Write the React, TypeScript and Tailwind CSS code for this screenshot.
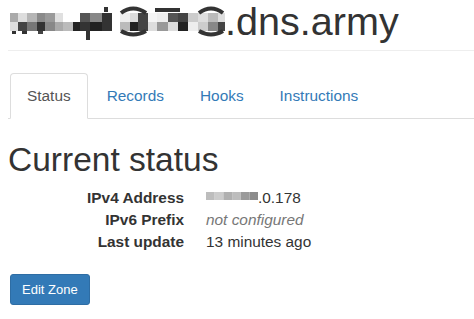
import React from "react";

const topRow: [number, string][] = [
  [10, "#aaaaaa"], [18, "#dddddd"], [27, "#b5b5b5"], [37, "#8a8a8a"], [45, "#9a9a9a"],
  [55, "#e0e0e0"], [63, "#ffffff"], [73, "#ffffff"], [80, "#555555"], [90, "#888888"],
  [102, "#333333"], [112, "#ffffff"], [120, "#eeeeee"], [130, "#dddddd"], [138, "#444444"],
  [148, "#f5f5f5"], [157, "#eeeeee"], [168, "#555555"], [178, "#444444"], [188, "#cccccc"],
  [198, "#dddddd"], [208, "#bbbbbb"], [218, "#dddddd"],
];
const bottomRow: [number, string][] = [
  [10, "#dddddd"], [18, "#444444"], [27, "#777777"], [37, "#333333"], [45, "#888888"],
  [55, "#aaaaaa"], [63, "#bbbbbb"], [73, "#222222"], [80, "#333333"], [90, "#222222"],
  [102, "#333333"], [112, "#ffffff"], [120, "#bbbbbb"], [130, "#222222"], [138, "#444444"],
  [148, "#dddddd"], [157, "#999999"], [168, "#dddddd"], [178, "#222222"], [188, "#eeeeee"],
  [198, "#cccccc"], [208, "#888888"], [218, "#444444"],
];

function widthOf(arr: [number, string][], i: number) {
  return i + 1 < arr.length ? arr[i + 1][0] - arr[i][0] : 7;
}

function TitleMosaic() {
  // svg origin at page x=8, y=1
  return (
    <svg width="217" height="40" viewBox="0 0 217 40" className="shrink-0">
      {topRow.map(([x, c], i) => (
        <rect key={"t" + i} x={x - 8} y={12} width={widthOf(topRow, i)} height={9} fill={c} />
      ))}
      {bottomRow.map(([x, c], i) => (
        <rect key={"b" + i} x={x - 8} y={21} width={widthOf(bottomRow, i)} height={9} fill={c} />
      ))}
      <rect x={4} y={30} width={4} height={3} fill="#333" />
      <rect x={14} y={30} width={5} height={3} fill="#333" />
      <rect x={30} y={30} width={5} height={3} fill="#444" />
      <rect x={78} y={30} width={4} height={9} fill="#333" />
      <rect x={96} y={6} width={4} height={5} fill="#333" />
      <path d="M113 12 Q125 3 138 12" stroke="#333" strokeWidth="4" fill="none" />
      <path d="M113 30 Q125 37 138 30" stroke="#333" strokeWidth="4" fill="none" />
      <path d="M147 9 L172 9" stroke="#333" strokeWidth="4" fill="none" />
      <path d="M191 12 Q203 3 215 12" stroke="#333" strokeWidth="4" fill="none" />
      <path d="M191 30 Q203 37 215 30" stroke="#333" strokeWidth="4" fill="none" />
    </svg>
  );
}

function IpMosaic() {
  const cols = ["#bdbdbd", "#cccccc", "#b0b0b0", "#bdbdbd", "#9a9a9a", "#8c8c8c"];
  return (
    <svg width="52" height="8" viewBox="0 0 52 8" className="shrink-0 mt-[5px]">
      {cols.map((c, i) => (
        <rect key={i} x={i * 8.7} y={0} width={8.7} height={8} fill={c} />
      ))}
    </svg>
  );
}

export default function App() {
  return (
    <div className="w-[474px] h-[319px] overflow-hidden bg-white pl-[8px] font-['Liberation_Sans',Arial,sans-serif] text-[#333]">
      <div className="pt-px pb-[9px] border-b border-[#eee] w-[600px]">
        <h1 className="flex text-[39.6px] leading-[40px] whitespace-nowrap font-normal">
          <TitleMosaic />
          <span>.dns.army</span>
        </h1>
      </div>

      <ul className="mt-[22px] flex border-b border-[#ddd] w-[600px] text-[15.4px] leading-[22px]">
        <li className="ml-[2px] mr-[2px] -mb-px">
          <a className="block px-[16px] py-[11px] border border-[#ddd] border-b-white rounded-t-[4px] bg-white text-[#555]">
            Status
          </a>
        </li>
        <li className="mr-[2px] -mb-px">
          <a className="block px-[16px] py-[11px] border border-transparent text-[#337ab7]">Records</a>
        </li>
        <li className="mr-[2px] -mb-px">
          <a className="block px-[16px] py-[11px] border border-transparent text-[#337ab7]">Hooks</a>
        </li>
        <li className="mr-[2px] -mb-px">
          <a className="block px-[16px] py-[11px] border border-transparent text-[#337ab7]">Instructions</a>
        </li>
      </ul>

      <h2 className="mt-[23px] mb-[9px] text-[33.5px] leading-[36px] font-normal">Current status</h2>

      <dl className="text-[15.4px] leading-[22px]">
        <div className="flex">
          <dt className="w-[176px] text-right font-bold">IPv4 Address</dt>
          <dd className="ml-[22px] flex items-start">
            <IpMosaic />
            <span>.0.178</span>
          </dd>
        </div>
        <div className="flex">
          <dt className="w-[176px] text-right font-bold">IPv6 Prefix</dt>
          <dd className="ml-[22px] italic text-[#777]">not configured</dd>
        </div>
        <div className="flex">
          <dt className="w-[176px] text-right font-bold">Last update</dt>
          <dd className="ml-[22px]">13 minutes ago</dd>
        </div>
      </dl>

      <button className="mt-[21px] ml-[2px] px-[11px] py-[5px] text-[13px] leading-[19px] bg-[#337ab7] border border-[#2e6da4] rounded-[3px] text-white">
        Edit Zone
      </button>
    </div>
  );
}
